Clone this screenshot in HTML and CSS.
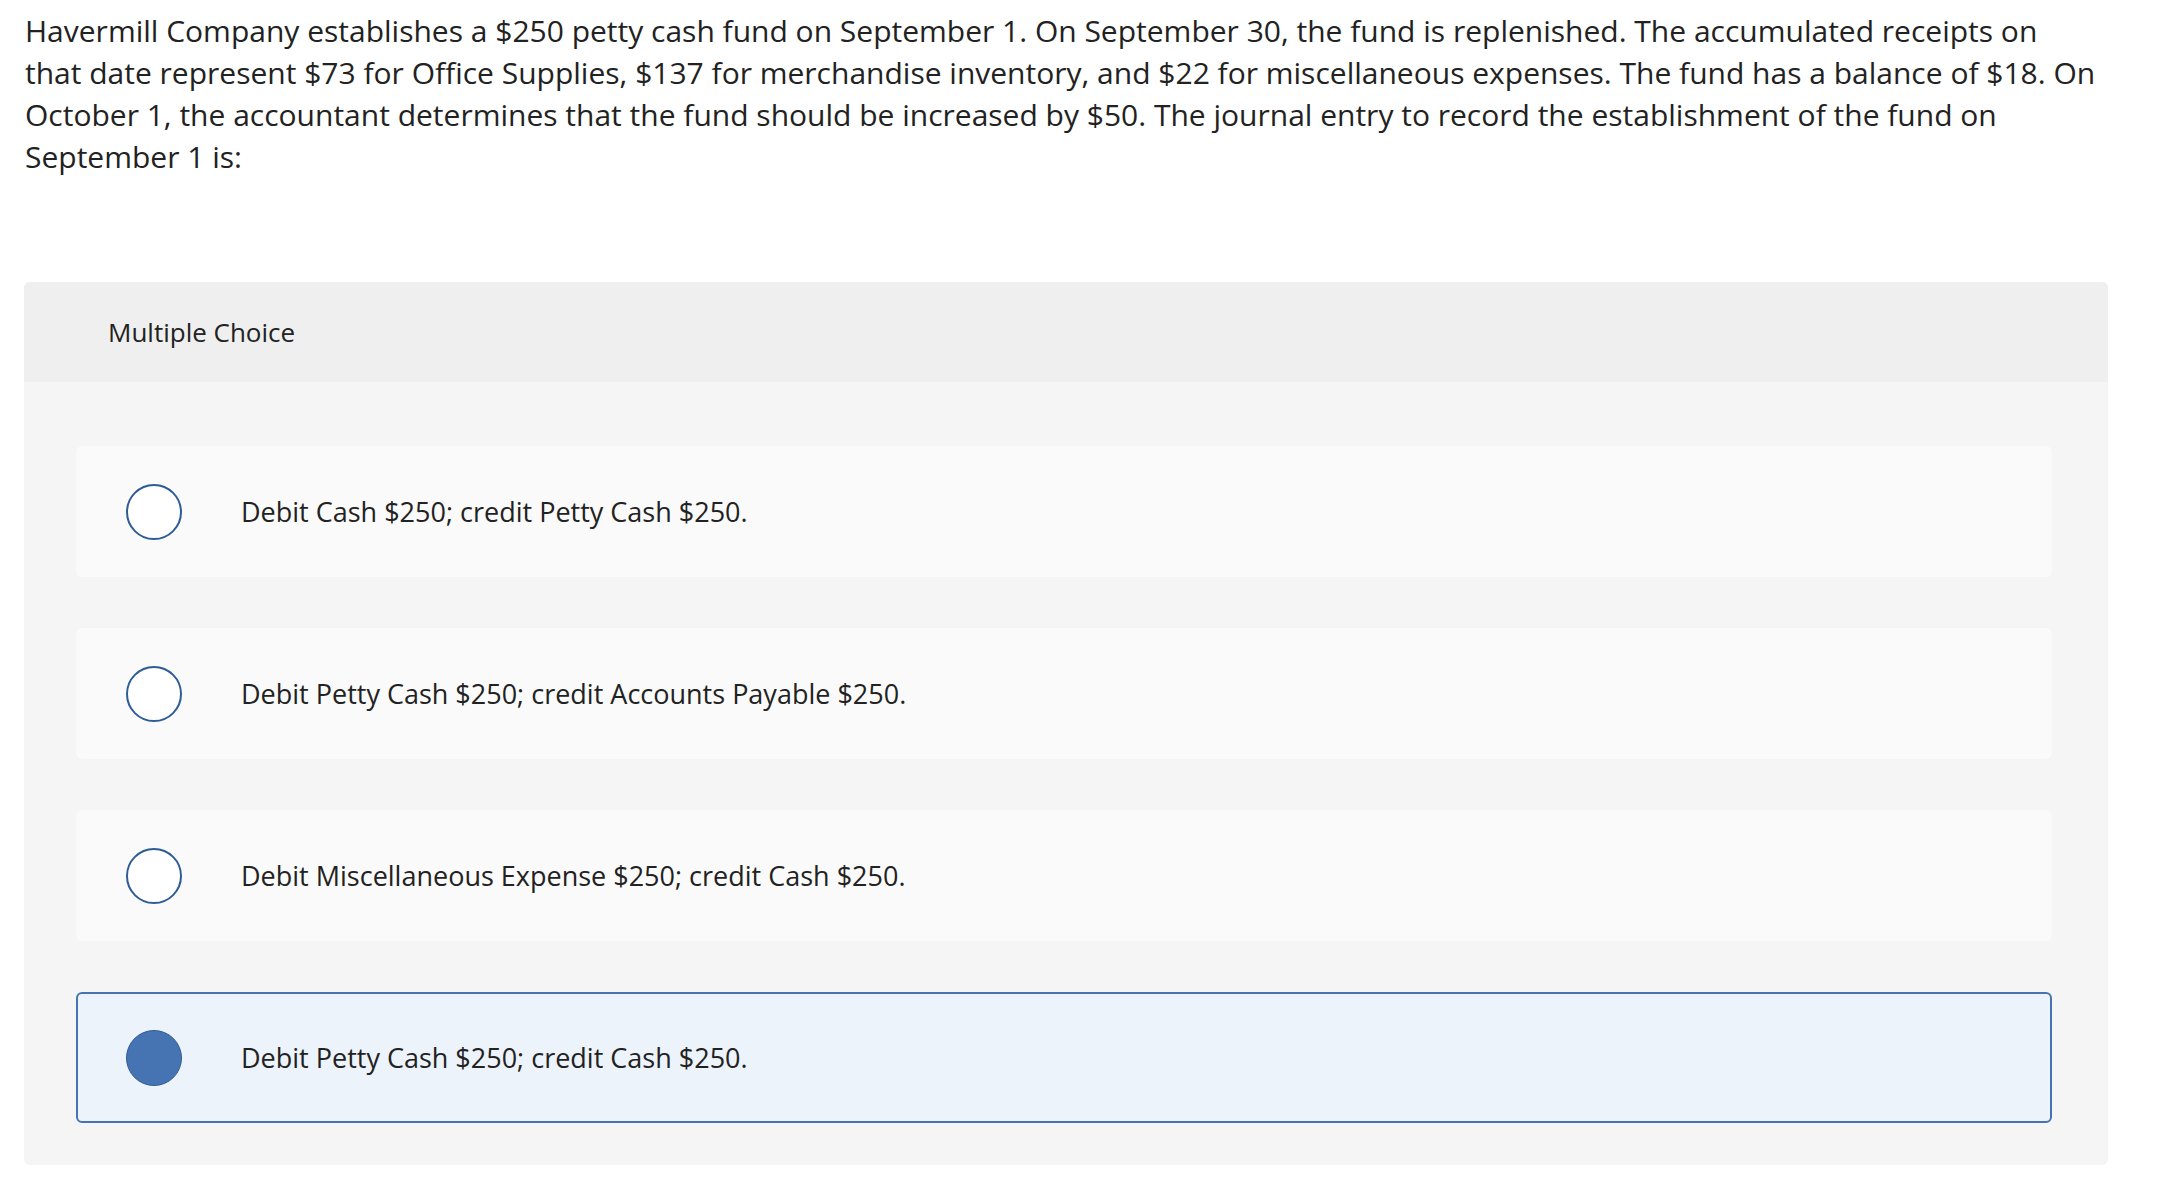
FILE: index.html
```html
<!DOCTYPE html>
<html>
<head>
  <title>Multiple Choice</title>
  <link rel="stylesheet" href="styles.css">
</head>
<body>
  <p class="question">Havermill Company establishes a $250 petty cash fund on September 1. On September 30, the fund is replenished. The accumulated receipts on<br>
  that date represent $73 for Office Supplies, $137 for merchandise inventory, and $22 for miscellaneous expenses. The fund has a balance of $18. On<br>
  October 1, the accountant determines that the fund should be increased by $50. The journal entry to record the establishment of the fund on<br>
  September 1 is:</p>

  <div class="choice-panel">
    <div class="choice-header">Multiple Choice</div>
    <div class="choice-list">
      <label class="choice">
        <span class="radio"></span>
        <span class="choice-text">Debit Cash $250; credit Petty Cash $250.</span>
      </label>
      <label class="choice">
        <span class="radio"></span>
        <span class="choice-text">Debit Petty Cash $250; credit Accounts Payable $250.</span>
      </label>
      <label class="choice">
        <span class="radio"></span>
        <span class="choice-text">Debit Miscellaneous Expense $250; credit Cash $250.</span>
      </label>
      <label class="choice selected">
        <span class="radio"></span>
        <span class="choice-text">Debit Petty Cash $250; credit Cash $250.</span>
      </label>
    </div>
  </div>
</body>
</html>
```

FILE: styles.css
```css
body {
  font-family: "Open Sans", Arial, sans-serif;
  color: #222;
  margin: 0;
  padding: 10px 64px 0 24px;
}
.question {
  margin: 0 0 104px;
  font-size: 30px;
  line-height: 42px;
  padding-left: 1px;
}
.choice-panel {
  border-radius: 6px;
  overflow: hidden;
  background-color: #f5f5f5;
}
.choice-header {
  height: 100px;
  display: flex;
  align-items: center;
  padding-left: 84px;
  background-color: #efefef;
  font-size: 26px;
}
.choice-list {
  display: flex;
  flex-direction: column;
  gap: 51px;
  padding: 64px 56px 42px 52px;
}
.choice {
  height: 131px;
  box-sizing: border-box;
  display: flex;
  align-items: center;
  padding-left: 50px;
  background-color: #fafafa;
  border-radius: 6px;
  cursor: pointer;
  font-size: 27px;
}
.radio {
  width: 56px;
  height: 56px;
  box-sizing: border-box;
  border: 2px solid #2e5c96;
  border-radius: 50%;
  background-color: #fff;
  margin-right: 59px;
  flex-shrink: 0;
}
.choice.selected {
  background-color: #edf3fa;
  border: 2px solid #4673b1;
  padding-left: 48px;
}
.choice.selected .radio {
  background-color: #4673b1;
  border-width: 1px;
}
```
